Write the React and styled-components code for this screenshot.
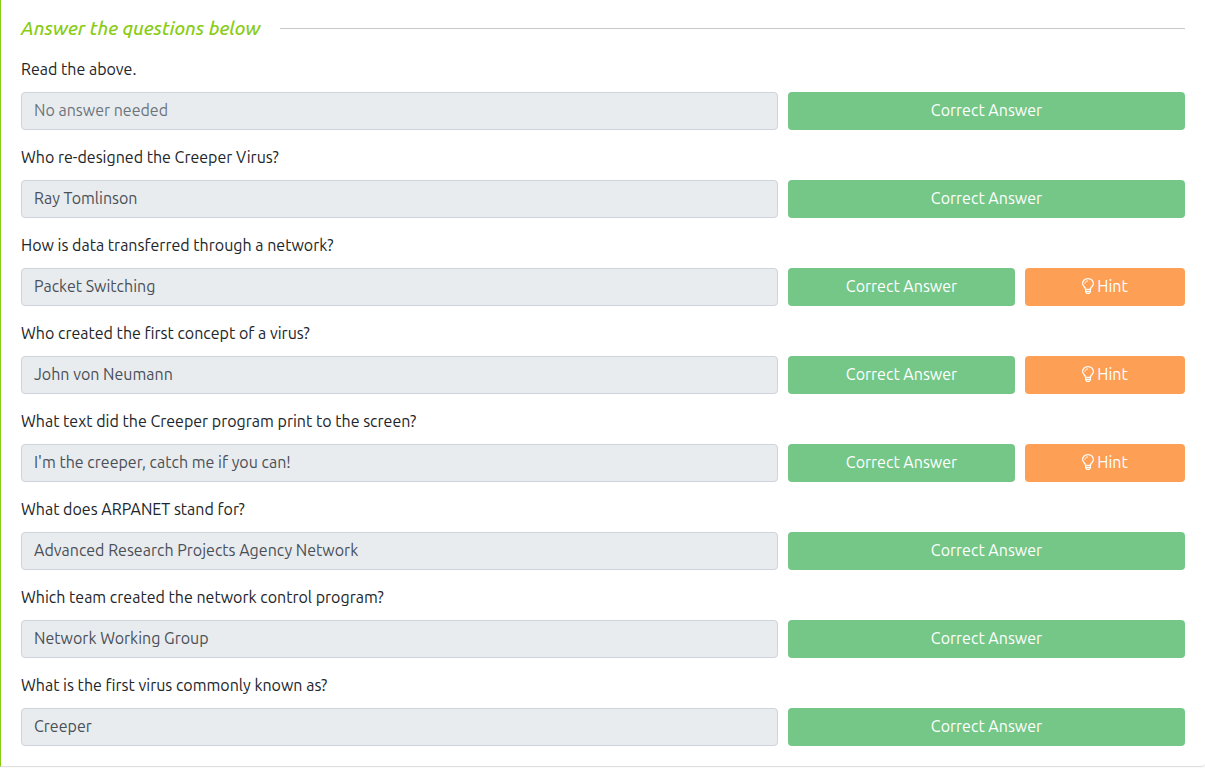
import React from "react";
import styled, { createGlobalStyle } from "styled-components";

const GlobalStyle = createGlobalStyle`
  *, *::before, *::after { box-sizing: border-box; }
  body {
    margin: 0;
    background: #fafafa;
    color: #212529;
    font: 400 16px/24px Ubuntu, "Noto Sans", sans-serif;
  }
`;

const Card = styled.main`
  padding: 16px 20px 20px;
  background: #fff;
  border-left: 1px solid #88cc14;
  border-bottom: 1px solid #dfdfdf;
  border-bottom-right-radius: 4px;
`;

const Header = styled.header`
  display: flex;
  align-items: center;
  gap: 20px;
  margin-bottom: 17px;

  &::after {
    content: "";
    flex: 1;
    height: 1px;
    background: #c8c8c8;
  }
`;

const Title = styled.h2`
  margin: 0;
  color: #88cc14;
  font-size: 19px;
  font-style: italic;
  font-weight: 500;
  line-height: 24px;
`;

const QuestionList = styled.form`
  display: grid;
  gap: 15px;
`;

const Question = styled.div`
  display: grid;
  gap: 11px;
`;

const Row = styled.div`
  display: grid;
  grid-template-columns: 757fr 397fr;
  gap: 10px;
`;

const Actions = styled.div`
  display: grid;
  grid-template-columns: ${(p) => (p.$hint ? "227fr 160fr" : "1fr")};
  gap: 10px;
`;

const AnswerInput = styled.input`
  width: 100%;
  height: 38px;
  padding: 0 12px 2px;
  border: 1px solid #ced4da;
  border-radius: 4px;
  background: #e9ecef;
  color: #495057;
  font: inherit;

  &::placeholder {
    color: #6c757d;
    opacity: 1;
  }
`;

const Button = styled.button`
  display: flex;
  align-items: center;
  justify-content: center;
  gap: 3px;
  height: 38px;
  padding: 0 12px 2px;
  border: 0;
  border-radius: 4px;
  background: ${(p) => (p.$tone === "hint" ? "#fda056" : "#74c787")};
  color: #fff;
  font: inherit;
`;

const BulbIcon = () => (
  <svg width="12" height="16" viewBox="0 0 12 16" fill="none" stroke="currentColor" strokeWidth="1.2" aria-hidden="true">
    <path d="M3.6 11.4C3.6 9 .6 8.400.6 5.600a5.400 5 0 0 1 10.800 0C11.400 8.400 8.400 9 8.400 11.400Z" />
    <path d="M3.600 11.400v2.600L5 15.400h2l1.400-1.400v-2.600M3.600 13.400h4.800" />
    <path d="M3 5.600C3 4 4.200 2.900 6 2.900" strokeWidth="1" />
  </svg>
);

const questions = [
  { text: "Read the above.", answer: "" },
  { text: "Who re-designed the Creeper Virus?", answer: "Ray Tomlinson" },
  { text: "How is data transferred through a network?", answer: "Packet Switching", hint: true },
  { text: "Who created the first concept of a virus?", answer: "John von Neumann", hint: true },
  { text: "What text did the Creeper program print to the screen?", answer: "I'm the creeper, catch me if you can!", hint: true },
  { text: "What does ARPANET stand for?", answer: "Advanced Research Projects Agency Network" },
  { text: "Which team created the network control program?", answer: "Network Working Group" },
  { text: "What is the first virus commonly known as?", answer: "Creeper" },
];

export default function App() {
  return (
    <>
      <GlobalStyle />
      <Card>
        <Header>
          <Title>Answer the questions below</Title>
        </Header>
        <QuestionList>
          {questions.map((q, i) => (
            <Question key={q.text}>
              <label htmlFor={`answer-${i}`}>{q.text}</label>
              <Row>
                <AnswerInput id={`answer-${i}`} defaultValue={q.answer} placeholder="No answer needed" disabled />
                <Actions $hint={q.hint}>
                  <Button type="button">Correct Answer</Button>
                  {q.hint && (
                    <Button type="button" $tone="hint">
                      <BulbIcon />
                      Hint
                    </Button>
                  )}
                </Actions>
              </Row>
            </Question>
          ))}
        </QuestionList>
      </Card>
    </>
  );
}
